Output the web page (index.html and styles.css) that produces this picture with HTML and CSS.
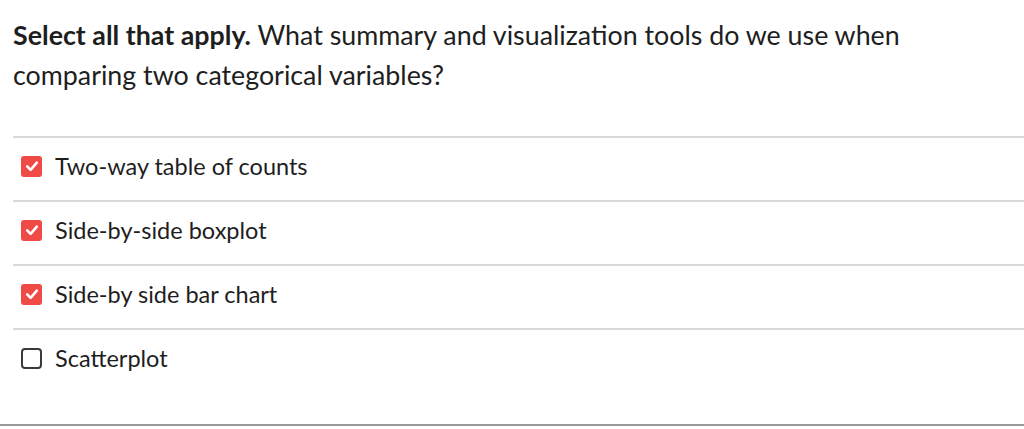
FILE: index.html
```html
<!DOCTYPE html>
<html>
<head>
<meta charset="utf-8">
<link rel="stylesheet" href="styles.css">
</head>
<body>
<div class="page">
  <div class="question">
    <p class="prompt"><strong>Select all that apply.</strong> What summary and visualization tools do we use when comparing two categorical variables?</p>
    <ul class="options">
      <li class="option"><span class="box checked"><svg viewBox="0 0 20 20" width="20" height="20"><path d="M5.2 10.4 L8.6 13.8 L14.8 6.6" fill="none" stroke="#fff" stroke-width="2.6" stroke-linecap="round" stroke-linejoin="round"/></svg></span><span class="label">Two-way table of counts</span></li>
      <li class="option"><span class="box checked"><svg viewBox="0 0 20 20" width="20" height="20"><path d="M5.2 10.4 L8.6 13.8 L14.8 6.6" fill="none" stroke="#fff" stroke-width="2.6" stroke-linecap="round" stroke-linejoin="round"/></svg></span><span class="label">Side-by-side boxplot</span></li>
      <li class="option"><span class="box checked"><svg viewBox="0 0 20 20" width="20" height="20"><path d="M5.2 10.4 L8.6 13.8 L14.8 6.6" fill="none" stroke="#fff" stroke-width="2.6" stroke-linecap="round" stroke-linejoin="round"/></svg></span><span class="label">Side-by side bar chart</span></li>
      <li class="option"><span class="box"></span><span class="label">Scatterplot</span></li>
    </ul>
  </div>
  <div class="footer-rule"></div>
</div>
</body>
</html>
```
FILE: styles.css
```css
html, body {
  margin: 0;
  padding: 0;
  background: #fff;
}
.page {
  width: 1024px;
  height: 429px;
  font-family: Lato, "Open Sans", sans-serif;
  color: #1e1e1e;
}
.question {
  padding-left: 13px;
  height: 424px;
}
.prompt {
  margin: 0;
  padding-top: 15px;
  font-size: 26.8px;
  line-height: 40px;
  width: 940px;
}
.prompt strong {
  font-weight: 700;
}
.options {
  list-style: none;
  margin: 41px 0 0 0;
  padding: 0;
  border-top: 2px solid #d9d9d9;
}
.option {
  display: flex;
  align-items: center;
  gap: 13px;
  height: 56px;
  padding-left: 8px;
  padding-bottom: 6px;
  border-bottom: 2px solid #d9d9d9;
}
.option:last-child {
  border-bottom: none;
}
.box {
  width: 21px;
  height: 21px;
  box-sizing: border-box;
  border: 2px solid #3a3a3a;
  border-radius: 4px;
  display: flex;
  align-items: center;
  justify-content: center;
  flex: none;
}
.box.checked {
  background: #ef4a45;
  border: none;
  border-radius: 3px;
}
.label {
  font-size: 23.5px;
  line-height: 30px;
}
.footer-rule {
  height: 2px;
  background: #999;
}
```
